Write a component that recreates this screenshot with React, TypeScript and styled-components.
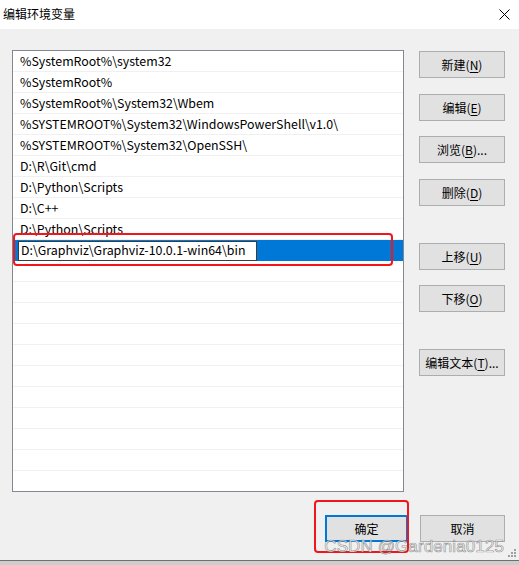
import React from 'react'
import styled, { createGlobalStyle } from 'styled-components'

const GlobalStyle = createGlobalStyle`
  html, body {
    margin: 0;
    padding: 0;
    background: #cdcdcd;
    overflow: hidden;
  }
  body {
    font-family: "Noto Sans CJK SC", "Noto Sans", sans-serif;
    font-size: 12px;
    color: #000;
  }
`

const paths = [
  '%SystemRoot%\\system32',
  '%SystemRoot%',
  '%SystemRoot%\\System32\\Wbem',
  '%SYSTEMROOT%\\System32\\WindowsPowerShell\\v1.0\\',
  '%SYSTEMROOT%\\System32\\OpenSSH\\',
  'D:\\R\\Git\\cmd',
  'D:\\Python\\Scripts',
  'D:\\C++',
  'D:\\Python\\Scripts'
]
const editing = 'D:\\Graphviz\\Graphviz-10.0.1-win64\\bin'
const emptyRows = 11

const Window = styled.div`
  height: 560px;
  display: flex;
  flex-direction: column;
  border-bottom: 1px solid #6f6f6f;
  background: #f0f0f0;
`

const TitleBar = styled.div`
  height: 29px;
  background: #fff;
  display: flex;
  align-items: center;
  justify-content: space-between;
  padding: 0 9px 0 3px;
  flex-shrink: 0;
`

const Title = styled.span`
  font-size: 12px;
  line-height: 1;
  margin-top: -1px;
`

const Body = styled.div`
  flex: 1;
  position: relative;
  padding: 21px 14px 0 12px;
  display: flex;
  flex-direction: column;
`

const Main = styled.div`
  display: flex;
  align-items: flex-start;
`

const ListBox = styled.div`
  width: 392px;
  height: 442px;
  box-sizing: border-box;
  border: 1px solid #828790;
  background: #fff;
  overflow: hidden;
  flex-shrink: 0;
  font-size: 12.4px;
`

const Row = styled.div<{ $selected?: boolean }>`
  height: 21px;
  box-sizing: border-box;
  border-bottom: 1px solid ${p => (p.$selected ? '#0078d7' : '#f0f0f0')};
  background: ${p => (p.$selected ? '#0078d7' : '#fff')};
  display: flex;
  align-items: center;
  padding-left: ${p => (p.$selected ? '5px' : '7px')};
  white-space: nowrap;
  line-height: 1;
`

const EditBox = styled.div`
  width: 239px;
  height: 20px;
  box-sizing: border-box;
  border: 1px solid #3c3c3c;
  background: #fff;
  display: flex;
  align-items: center;
  padding-left: 2px;
  margin-top: 1px;
`

const SideButtons = styled.div`
  display: flex;
  flex-direction: column;
  margin-left: 15px;
  margin-top: 1px;
`

const Button = styled.button<{ $gap?: number; $w?: number; $default?: boolean }>`
  width: ${p => p.$w ?? 86}px;
  height: 27px;
  margin-top: ${p => p.$gap ?? 0}px;
  box-sizing: border-box;
  background: #e1e1e1;
  border: ${p => (p.$default ? '2px solid #0078d7' : '1px solid #adadad')};
  border-radius: 0;
  font-family: "Noto Sans CJK SC", "Noto Sans", sans-serif;
  font-size: 12px;
  color: #000;
  padding: 0;
  display: flex;
  align-items: center;
  justify-content: center;
  line-height: 1;
`

const Footer = styled.div`
  display: flex;
  justify-content: flex-end;
  gap: 12px;
  margin-top: 23px;
`

const Mnemonic = styled.u`
  text-decoration: underline;
  text-underline-offset: 2px;
`

const Highlight = styled.div<{ $x: number; $y: number; $w: number; $h: number }>`
  position: absolute;
  left: ${p => p.$x}px;
  top: ${p => p.$y}px;
  width: ${p => p.$w}px;
  height: ${p => p.$h}px;
  box-sizing: border-box;
  border: 2.5px solid #f0161b;
  border-radius: 4px;
  pointer-events: none;
`

const Watermark = styled.div`
  position: absolute;
  right: 15px;
  bottom: 3px;
  font-family: "Liberation Sans", Arial, sans-serif;
  font-size: 17px;
  letter-spacing: 0.1px;
  color: rgba(255, 255, 255, 0.8);
  -webkit-text-stroke: 0.7px rgba(90, 90, 90, 0.6);
  pointer-events: none;
  white-space: nowrap;
`

const Grip = styled.svg`
  position: absolute;
  right: 3px;
  bottom: 3px;
`

const Label = ({ text, k, tail = '' }: { text: string; k: string; tail?: string }) => (
  <span>
    {text}(<Mnemonic>{k}</Mnemonic>){tail}
  </span>
)

export default function App() {
  return (
    <>
      <GlobalStyle />
      <Window>
        <TitleBar>
          <Title>编辑环境变量</Title>
          <svg width="11" height="11" viewBox="0 0 11 11">
            <path d="M0.5 0.5 L10.5 10.5 M10.5 0.5 L0.5 10.5" stroke="#000" strokeWidth="1" />
          </svg>
        </TitleBar>
        <Body>
          <Main>
            <ListBox>
              {paths.map((p, i) => (
                <Row key={i}>{p}</Row>
              ))}
              <Row $selected>
                <EditBox>{editing}</EditBox>
              </Row>
              {Array.from({ length: emptyRows }).map((_, i) => (
                <Row key={'e' + i} />
              ))}
            </ListBox>
            <SideButtons>
              <Button><Label text="新建" k="N" /></Button>
              <Button $gap={16}><Label text="编辑" k="E" /></Button>
              <Button $gap={15}><Label text="浏览" k="B" tail="..." /></Button>
              <Button $gap={16}><Label text="删除" k="D" /></Button>
              <Button $gap={37}><Label text="上移" k="U" /></Button>
              <Button $gap={15}><Label text="下移" k="O" /></Button>
              <Button $gap={37}><Label text="编辑文本" k="T" tail="..." /></Button>
            </SideButtons>
          </Main>
          <Footer>
            <Button $w={83} $default>确定</Button>
            <Button $w={85}>取消</Button>
          </Footer>
          <Highlight $x={13} $y={204} $w={380} $h={33} />
          <Highlight $x={314} $y={471} $w={95} $h={53} />
          <Watermark>CSDN @Gardenia0125</Watermark>
          <Grip width="9" height="9" viewBox="0 0 9 9">
            <g fill="#a0a0a0">
              <rect x="7" y="1" width="2" height="2" />
              <rect x="4" y="4" width="2" height="2" />
              <rect x="7" y="4" width="2" height="2" />
              <rect x="1" y="7" width="2" height="2" />
              <rect x="4" y="7" width="2" height="2" />
              <rect x="7" y="7" width="2" height="2" />
            </g>
          </Grip>
        </Body>
      </Window>
    </>
  )
}
